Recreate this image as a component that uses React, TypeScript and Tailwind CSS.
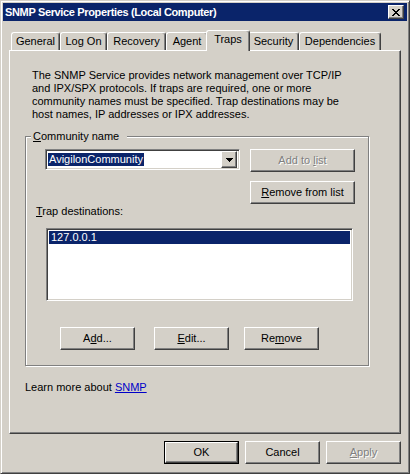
import React from "react";

const raised =
  "border border-t-white border-l-white border-r-[#404040] border-b-[#404040] shadow-[inset_-1px_-1px_0_#808080]";
const sunken =
  "border border-t-[#808080] border-l-[#808080] border-r-white border-b-white shadow-[inset_1px_1px_0_#404040,inset_-1px_-1px_0_#d4d0c8]";
const disabledText = "text-[#808080] [text-shadow:1px_1px_0_#fff]";

function Btn({
  children,
  w = "w-[75px]",
  isDefault = false,
  disabled = false,
  className = "",
}: {
  children: React.ReactNode;
  w?: string;
  isDefault?: boolean;
  disabled?: boolean;
  className?: string;
}) {
  return (
    <div className={`h-[23px] shrink-0 ${w} ${isDefault ? "border border-black" : ""} ${className}`}>
      <div
        className={`flex h-full w-full items-center justify-center bg-[#d4d0c8] ${raised} ${
          disabled ? disabledText : "text-black"
        }`}
      >
        <span>{children}</span>
      </div>
    </div>
  );
}

function Tab({ label, w, active = false }: { label: string; w: string; active?: boolean }) {
  if (active) {
    return (
      <div
        className={`relative z-10 -mx-[2px] -mb-[1px] h-[21px] ${w} shrink-0 rounded-t-[3px] border-t border-l border-r border-t-white border-l-white border-r-[#404040] bg-[#d4d0c8] shadow-[inset_-1px_0_0_#808080] pt-[2px] text-center`}
      >
        {label}
      </div>
    );
  }
  return (
    <div
      className={`flex h-[18px] ${w} shrink-0 items-center justify-center rounded-t-[3px] border-t border-l border-r border-t-white border-l-white border-r-[#404040] shadow-[inset_-1px_0_0_#808080]`}
    >
      {label}
    </div>
  );
}

function CloseGlyph() {
  const px = [
    [0, 0], [1, 0], [6, 0], [7, 0],
    [1, 1], [2, 1], [5, 1], [6, 1],
    [2, 2], [3, 2], [4, 2], [5, 2],
    [3, 3], [4, 3],
    [2, 4], [3, 4], [4, 4], [5, 4],
    [1, 5], [2, 5], [5, 5], [6, 5],
    [0, 6], [1, 6], [6, 6], [7, 6],
  ];
  return (
    <svg width="8" height="7" viewBox="0 0 8 7" shapeRendering="crispEdges">
      {px.map(([x, y]) => (
        <rect key={`${x}-${y}`} x={x} y={y} width="1" height="1" fill="#000" />
      ))}
    </svg>
  );
}

export default function App() {
  const tabs = [
    { label: "General", w: "w-[49px]" },
    { label: "Log On", w: "w-[47px]" },
    { label: "Recovery", w: "w-[59px]" },
    { label: "Agent", w: "w-[42px]" },
    { label: "Traps", w: "w-[44px]", active: true },
    { label: "Security", w: "w-[51px]" },
    { label: "Dependencies", w: "w-[82px]" },
  ];

  return (
    <div className="w-[410px] h-[474px] bg-[#d4d0c8] font-['Liberation_Sans',Arial,sans-serif] text-[11px] leading-[13px] text-black">
      <div className="flex h-full w-full flex-col border border-t-[#d4d0c8] border-l-[#d4d0c8] border-r-[#404040] border-b-[#404040] p-[2px] shadow-[inset_1px_1px_0_#fff,inset_-1px_-1px_0_#808080]">
        {/* Title bar */}
        <div className="flex h-[18px] shrink-0 items-center justify-between bg-[#0a246a] pl-[2px] pr-[3px]">
          <span className="font-bold tracking-[-0.35px] text-white">SNMP Service Properties (Local Computer)</span>
          <div className={`flex h-[14px] w-[16px] items-center justify-center bg-[#d4d0c8] ${raised}`}>
            <CloseGlyph />
          </div>
        </div>

        <div className="flex flex-col px-[6px] pt-[9px]">
          {/* Tabs */}
          <div className="flex h-[20px] items-end pl-[2px]">
            {tabs.map((t) => (
              <Tab key={t.label} label={t.label} w={t.w} active={t.active} />
            ))}
          </div>

          {/* Tab page */}
          <div className="flex h-[384px] flex-col border border-t-white border-l-white border-r-[#404040] border-b-[#404040] pl-[15px] pt-[18px] shadow-[inset_-1px_-1px_0_#808080]">
            <p className="ml-[7px]">
              The SNMP Service provides network management over TCP/IP
              <br />
              and IPX/SPX protocols. If traps are required, one or more
              <br />
              community names must be specified. Trap destinations may be
              <br />
              host names, IP addresses or IPX addresses.
            </p>

            <fieldset className="mt-[9px] w-[344px] border border-[#808080] p-0 shadow-[inset_1px_1px_0_#fff,1px_1px_0_#fff]">
              <legend className="ml-[5px] bg-[#d4d0c8] pl-[2px] pr-[8px]">
                <u>C</u>ommunity name
              </legend>

              <div className="flex pl-[19px] pt-[6px]">
                {/* Combo */}
                <div className={`flex h-[21px] w-[195px] items-center justify-between bg-white p-[2px] ${sunken}`}>
                  <span className="h-[13px] bg-[#0a246a] px-[1px] text-white">AvigilonCommunity</span>
                  <div className={`flex h-[17px] w-[16px] items-center justify-center bg-[#d4d0c8] ${raised}`}>
                    <svg width="7" height="4" viewBox="0 0 7 4" shapeRendering="crispEdges">
                      <path d="M0 0h7v1H0zM1 1h5v1H1zM2 2h3v1H2zM3 3h1v1H3z" fill="#000" />
                    </svg>
                  </div>
                </div>
                <div className="ml-[10px] flex flex-col gap-[9px]">
                  <Btn w="w-[105px]" disabled>
                    Add to <u>l</u>ist
                  </Btn>
                  <Btn w="w-[105px]">
                    <u>R</u>emove from list
                  </Btn>
                </div>
              </div>

              <div className="mt-[1px] pl-[10px]">
                <u>T</u>rap destinations:
              </div>

              <div className={`ml-[20px] mt-[10px] h-[73px] w-[307px] bg-white p-[2px] ${sunken}`}>
                <div className="h-[13px] bg-[#0a246a] pl-[2px] text-white">127.0.0.1</div>
              </div>

              <div className="mt-[26px] flex pb-[15px] pl-[34px]">
                <Btn>
                  A<u>d</u>d...
                </Btn>
                <Btn className="ml-[19px]">
                  <u>E</u>dit...
                </Btn>
                <Btn className="ml-[15px]">
                  Re<u>m</u>ove
                </Btn>
              </div>
            </fieldset>

            <div className="mt-[15px]">
              Learn more about <span className="text-[#0000c8] underline">SNMP</span>
            </div>
          </div>

          {/* Dialog buttons */}
          <div className="mt-[7px] flex justify-end gap-[6px]">
            <Btn isDefault>OK</Btn>
            <Btn>Cancel</Btn>
            <Btn disabled>
              <u>A</u>pply
            </Btn>
          </div>
        </div>
      </div>
    </div>
  );
}
